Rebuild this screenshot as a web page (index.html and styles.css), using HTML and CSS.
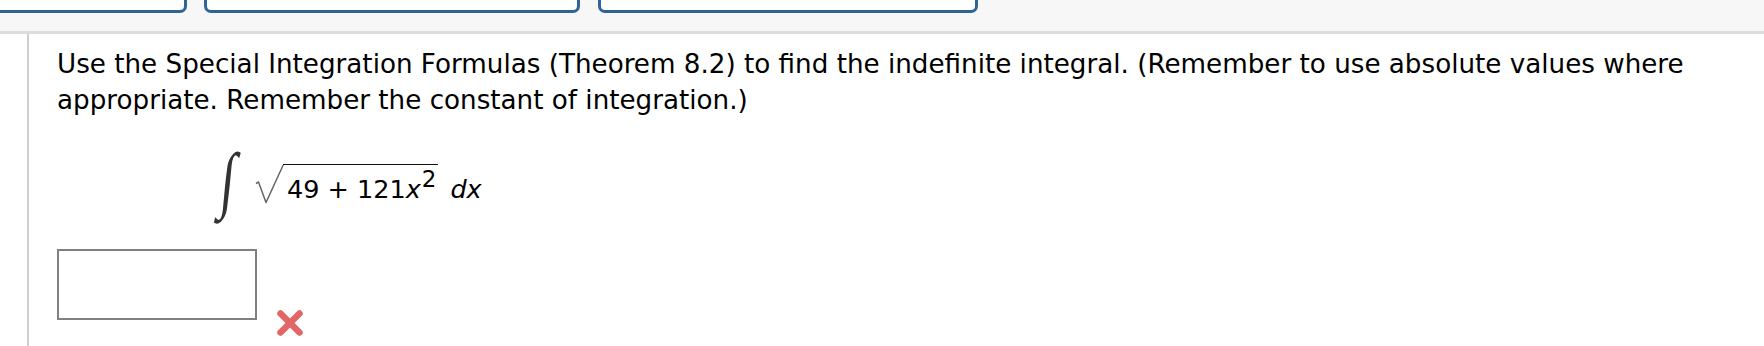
FILE: index.html
```html
<!DOCTYPE html>
<html>
<head>
<meta charset="utf-8">
<link rel="stylesheet" href="styles.css">
</head>
<body>
<div class="header">
  <div class="tab tab1"></div>
  <div class="tab tab2"></div>
  <div class="tab tab3"></div>
</div>
<div class="content">
  <div class="question">
    <p class="prompt">Use the Special Integration Formulas (Theorem 8.2) to find the indefinite integral. (Remember to use absolute values where appropriate. Remember the constant of integration.)</p>
    <div class="math">
      <span class="integral">∫</span>
      <svg class="radical" width="29" height="40" viewBox="0 0 29 40"><path d="M1 19.5 L3.5 18 L11 38.5 L28.2 1" fill="none" stroke="#666" stroke-width="1.5" stroke-linejoin="round"/></svg>
      <span class="radicand">49 + 121<i>x</i><sup>2</sup></span>
      <span class="dx"><i>dx</i></span>
    </div>
    <div class="answer">
      <div class="input"></div>
      <svg class="wrong" width="30" height="30" viewBox="0 0 30 30"><g stroke="#e05656" stroke-width="6.5" stroke-linecap="round" opacity="0.9"><path d="M5.5 5.5 L24.5 24.5"/><path d="M24.5 5.5 L5.5 24.5"/></g></svg>
    </div>
  </div>
</div>
</body>
</html>
```
FILE: styles.css
```css
html, body {
  margin: 0;
  padding: 0;
  background: #fff;
  height: 346px;
  overflow: hidden;
}
.header {
  height: 31px;
  background: #f7f7f7;
  border-bottom: 3px solid #dcdcdc;
  display: flex;
  align-items: flex-start;
}
.tab {
  height: 10px;
  background: #fff;
  border: 3px solid #2f6496;
  border-top: none;
  border-radius: 0 0 7px 7px;
}
.tab1 { width: 190px; margin-left: -6px; border-left: none; border-radius: 0 0 7px 0; }
.tab2 { width: 370px; margin-left: 17px; }
.tab3 { width: 374px; margin-left: 18px; }
.content {
  height: 312px;
  display: flex;
}
.question {
  margin-left: 27px;
  border-left: 2px solid #cfcfcf;
  padding-left: 28px;
  flex: 1;
  font-family: "DejaVu Sans", Verdana, sans-serif;
  color: #000;
}
.prompt {
  margin: 12px 0 0 0;
  font-size: 26.2px;
  line-height: 36px;
}
.math {
  display: flex;
  align-items: flex-start;
  margin: 39px 0 0 156px;
  height: 76px;
}
.integral {
  font-family: "Liberation Serif", serif;
  font-size: 70px;
  line-height: 76px;
  height: 76px;
  width: 30px;
  text-align: center;
  color: #333;
  display: inline-block;
  transform: scale(0.75, 1.05) skewX(-8deg);
  transform-origin: 50% 50%;
  margin-top: -15px;
}
.radical {
  margin: 7px 0 0 12px;
}
.radicand {
  font-size: 25.5px;
  line-height: 30px;
  border-top: 1.5px solid #111;
  padding: 9px 2px 0 4px;
  margin: 7px 0 0 -1px;
  white-space: nowrap;
}
.radicand sup {
  font-size: 23px;
  line-height: 0;
  vertical-align: 11px;
  margin-left: 1px;
}
.dx {
  font-size: 25.5px;
  line-height: 30px;
  margin: 17px 0 0 12px;
}
.answer {
  display: flex;
  align-items: flex-start;
  margin-top: 16px;
}
.input {
  width: 196px;
  height: 67px;
  border: 2px solid #808080;
}
.wrong {
  margin-left: 18px;
  margin-top: 59px;
  filter: blur(0.5px);
}
```
